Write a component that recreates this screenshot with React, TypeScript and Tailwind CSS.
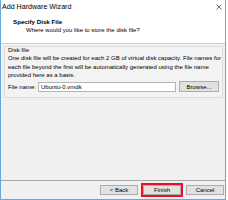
export default function App() {
  return (
    <div className="w-[228px] h-[200px] overflow-hidden bg-white font-['Liberation_Sans',Arial,sans-serif] text-black">
      <div className="w-[226px] h-[200px] flex flex-col border-x border-b border-[#6aa5dc]">
        {/* Title bar */}
        <div className="h-[14px] flex items-center justify-between bg-white pl-[1px] pr-[3px]">
          <span className="text-[7.1px] leading-[8px]">Add Hardware Wizard</span>
          <svg width="6" height="6" viewBox="0 0 6 6">
            <path d="M0.5 0.5 L5.5 5.5 M5.5 0.5 L0.5 5.5" stroke="#333" strokeWidth="0.7" />
          </svg>
        </div>

        {/* Header */}
        <div className="h-[29px] bg-white pt-[4px] pl-[12px] flex flex-col">
          <span className="text-[6.2px] leading-[8px] font-bold">Specify Disk File</span>
          <span className="text-[6px] leading-[8px] pl-[13px]">
            Where would you like to store the disk file?
          </span>
        </div>
        <div className="h-px bg-[#d0d0d0]" />

        {/* Body */}
        <div className="flex-1 bg-[#f0f0f0] flex flex-col pt-[2px] pl-[3px] pr-[2px]">
          <div className="border border-[#dcdcdc] bg-[#f3f3f3] pl-[3px] pr-[2px] pb-[5px] flex flex-col text-[6px] whitespace-nowrap">
            <span className="leading-[7px]">Disk file</span>
            <p className="leading-[8.5px]">
              One disk file will be created for each 2 GB of virtual disk capacity. File names for
              <br />
              each file beyond the first will be automatically generated using the file name
              <br />
              provided here as a basis.
            </p>
            <div className="mt-[1.5px] h-[11px] flex items-center">
              <span className="w-[30px] leading-[8px]">File name:</span>
              <div className="w-[138px] h-[10px] bg-white border border-[#b5b5b5] flex items-center pl-[2px] leading-[8px]">
                Ubuntu-0.vmdk
              </div>
              <div className="ml-[3px] w-[40px] h-[11px] bg-[#e1e1e1] border border-[#adadad] flex items-center justify-center leading-[8px]">
                Browse...
              </div>
            </div>
          </div>
        </div>

        {/* Footer */}
        <div className="h-px bg-[#a8a8a8]" />
        <div className="h-[18px] bg-[#f0f0f0] flex justify-end items-start pt-[4px] pr-[1px] gap-[5px] text-[6px]">
          <div className="w-[38px] h-[10px] bg-[#e1e1e1] border border-[#adadad] flex items-center justify-center leading-[8px]">
            &lt; Back
          </div>
          <div className="w-[38px] h-[10px] bg-[#e1e1e1] border border-[#adadad] outline-2 outline-[#e8132b] flex items-center justify-center leading-[8px]">
            Finish
          </div>
          <div className="w-[38px] h-[10px] bg-[#e1e1e1] border border-[#adadad] flex items-center justify-center leading-[8px]">
            Cancel
          </div>
        </div>
      </div>
    </div>
  );
}
